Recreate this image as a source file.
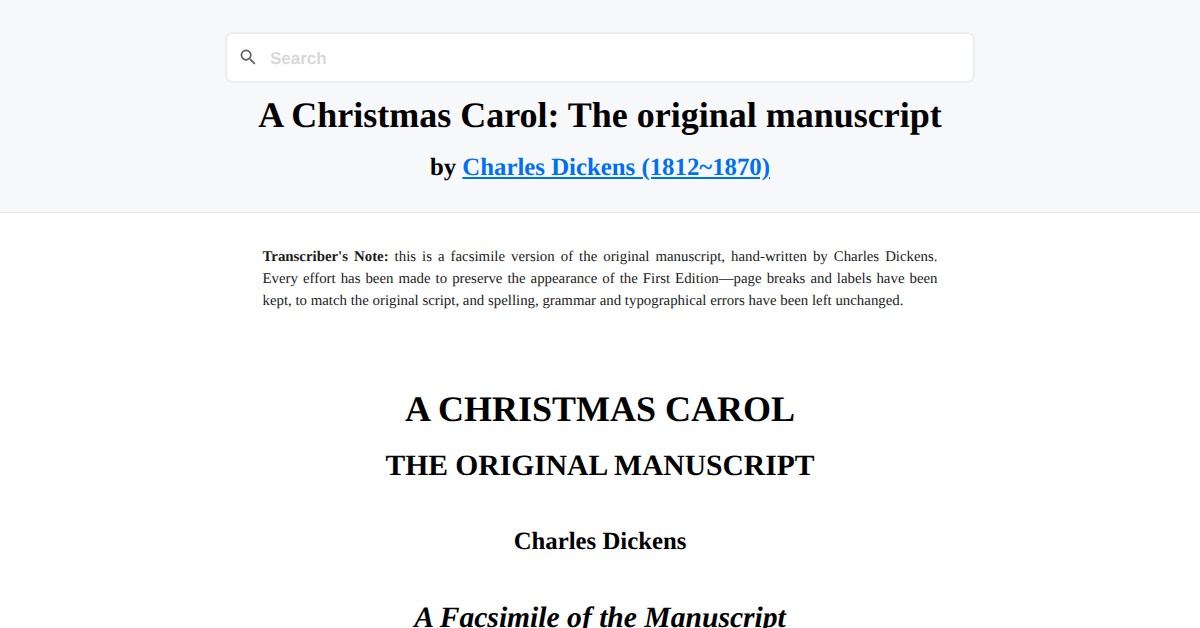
<template>
  <div class="page">
    <header class="hero">
      <div class="search">
        <svg class="icon" viewBox="0 0 24 24" width="20.5" height="20.5"><path fill="#5f6368" d="M15.5 14h-.79l-.28-.27A6.47 6.47 0 0 0 16 9.5 6.5 6.5 0 1 0 9.5 16c1.61 0 3.09-.59 4.23-1.57l.27.28v.79l5 4.99L20.49 19l-4.99-5zm-6 0C7.01 14 5 11.99 5 9.5S7.01 5 9.5 5 14 7.01 14 9.5 11.99 14 9.5 14z"/></svg>
        <span class="placeholder">Search</span>
      </div>
      <h1 class="title">A Christmas Carol: The original manuscript</h1>
      <h2 class="by">by <a href="#">Charles Dickens (1812~1870)</a></h2>
    </header>
    <main class="content">
      <p class="note"><b>Transcriber's Note:</b> this is a facsimile version of the original manuscript, hand-written by Charles Dickens. Every effort has been made to preserve the appearance of the First Edition—page breaks and labels have been kept, to match the original script, and spelling, grammar and typographical errors have been left unchanged.</p>
      <h1 class="c1">A CHRISTMAS CAROL</h1>
      <h2 class="c2">THE ORIGINAL MANUSCRIPT</h2>
      <h3 class="c3">Charles Dickens</h3>
      <h2 class="c4">A Facsimile of the Manuscript</h2>
    </main>
  </div>
</template>

<style>
html, body { margin: 0; height: 628px; overflow: hidden; background: #fff; }
</style>

<style scoped>
.page { font-family: "Liberation Serif", serif; color: #000; height: 628px; overflow: hidden; text-rendering: geometricPrecision; }
.hero { background: #f7f8fa; border-bottom: 1px solid #e5e7eb; height: 213px; box-sizing: border-box; padding-top: 32px; display: flex; flex-direction: column; align-items: center; }
.search { width: 750px; height: 51px; box-sizing: border-box; background: #fff; border: 2px solid #eceef1; border-radius: 8px; display: flex; align-items: center; padding-left: 11px; gap: 11.5px; }
.placeholder { font-family: "Liberation Sans", sans-serif; font-size: 17px; line-height: 22px; font-weight: 700; color: #d8d8d8; padding-top: 2px; }
.title { font-size: 36px; line-height: 44px; margin: 10px 0 0; font-weight: 700; }
.by { font-size: 24.8px; line-height: 32px; margin: 15px 0 0; font-weight: 700; }
.by a { color: #0070f3; }
.content { width: 675px; margin: 0 auto; }
.note { font-size: 14.85px; line-height: 22px; color: #1a1a1a; text-align: justify; margin: 33px 0 0; }
.c1, .c2, .c3, .c4 { text-align: center; margin: 0; font-weight: 700; }
.c1 { font-size: 36px; line-height: 44px; margin-top: 75px; }
.c2 { font-size: 29.6px; line-height: 36px; margin-top: 17px; }
.c3 { font-size: 24.75px; line-height: 30px; margin-top: 43px; }
.c4 { font-size: 29.6px; line-height: 36px; margin-top: 43px; font-style: italic; }
</style>
